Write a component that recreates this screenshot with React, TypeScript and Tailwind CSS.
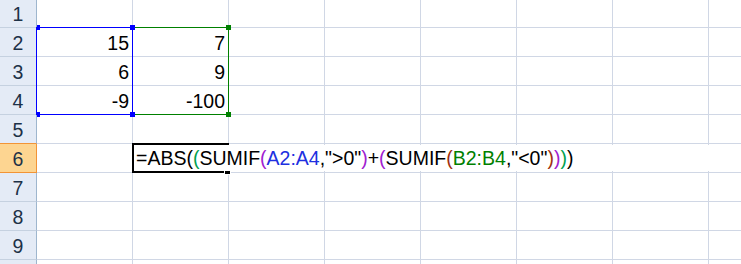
const values: Record<number, [string, string]> = {
  2: ['15', '7'],
  3: ['6', '9'],
  4: ['-9', '-100'],
};

const rows = [1, 2, 3, 4, 5, 6, 7, 8, 9, 10];
const cols = ['A', 'B', 'C', 'D', 'E', 'F', 'G', 'H'];

function RowHeader({ n }: { n: number }) {
  const active = n === 6;
  const above = n === 5;
  return (
    <div
      className={`w-[37px] h-[29px] shrink-0 border-r border-b text-center pt-[2px] leading-[26px] text-[#1d3147] ${
        active
          ? 'bg-[#fdd591] border-r-[#f29436] border-b-[#f29436]'
          : above
          ? 'bg-[#e4ebf6] border-r-[#9eb6ce] border-b-[#f29436]'
          : 'bg-[#e4ebf6] border-r-[#9eb6ce] border-b-[#c5d1e0]'
      }`}
    >
      {n < 10 ? n : ''}
    </div>
  );
}

export default function App() {
  return (
    <div className="relative w-[741px] h-[264px] overflow-hidden bg-white text-[19.5px] text-black font-['Liberation_Sans',Arial,sans-serif]">
      <div className="-mt-px">
        {rows.map((r) => (
          <div key={r} className="flex">
            <RowHeader n={r} />
            {cols.map((c, i) => (
              <div
                key={c}
                className="w-[96px] h-[29px] shrink-0 border-r border-b border-[#d0d7e5] text-right pr-[3px] pt-[2px] leading-[26px]"
              >
                {i < 2 && values[r] ? values[r][i] : ''}
              </div>
            ))}
          </div>
        ))}
      </div>

      {/* range B2:B4 */}
      <div className="absolute left-[133px] top-[27px] w-[96px] h-[88px] border border-l-0 border-[#008000]">
        <div className="absolute -right-[3px] -top-[3px] w-[5px] h-[5px] bg-[#008000]" />
        <div className="absolute -right-[3px] -bottom-[3px] w-[5px] h-[5px] bg-[#008000]" />
      </div>

      {/* range A2:A4 */}
      <div className="absolute left-[36px] top-[27px] w-[97px] h-[88px] border border-[#0000ff]">
        <div className="absolute left-0 -top-[3px] w-[3px] h-[5px] bg-[#0000ff]" />
        <div className="absolute left-0 -bottom-[3px] w-[3px] h-[5px] bg-[#0000ff]" />
        <div className="absolute -right-[3px] -top-[3px] w-[5px] h-[5px] bg-[#0000ff]" />
        <div className="absolute -right-[3px] -bottom-[3px] w-[5px] h-[5px] bg-[#0000ff]" />
      </div>

      {/* active cell B6 in edit mode */}
      <div className="absolute left-[132px] top-[143px] right-0 h-[30px] flex">
        <div className="absolute left-0 top-0 w-[97px] h-[30px] border-2 border-r-0 border-black">
          <div className="absolute left-[91px] -bottom-[3px] w-[5px] h-[5px] bg-black outline outline-1 outline-white" />
        </div>
        <div className="relative mt-[2px] ml-[2px] flex-1 h-[26px] bg-white leading-[26px] pl-[2px] whitespace-nowrap">
          =ABS(<span className="text-[#00a050]">(</span>SUMIF<span className="text-[#a020d0]">(</span>
          <span className="text-[#2030e0]">A2:A4</span>,"&gt;0"<span className="text-[#a020d0]">)</span>+
          <span className="text-[#a020d0]">(</span>SUMIF<span className="text-[#a03010]">(</span>
          <span className="text-[#008000]">B2:B4</span>,"&lt;0"<span className="text-[#a03010]">)</span>
          <span className="text-[#a020d0]">)</span>
          <span className="text-[#00a050]">)</span>)
        </div>
      </div>
    </div>
  );
}
